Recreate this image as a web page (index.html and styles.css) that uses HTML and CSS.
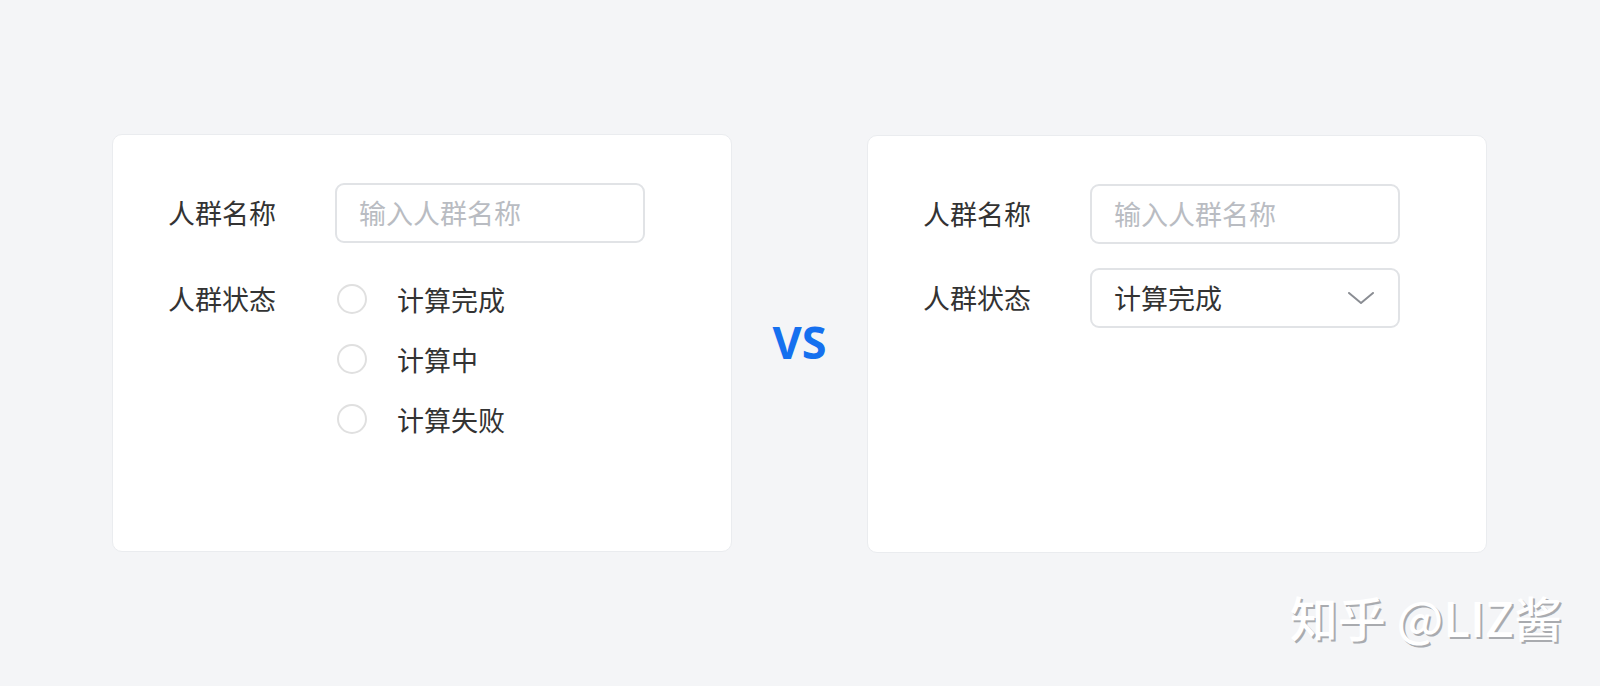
FILE: index.html
```html
<!DOCTYPE html>
<html lang="zh-CN">
<head>
<meta charset="utf-8">
<title>人群筛选对比</title>
<link rel="stylesheet" href="styles.css">
</head>
<body>
<div class="stage">
  <div class="card">
    <div class="row">
      <div class="label">人群名称</div>
      <div class="input placeholder">输入人群名称</div>
    </div>
    <div class="row">
      <div class="label">人群状态</div>
      <div class="radios">
        <div class="radio"><span class="circle"></span><span class="rtext">计算完成</span></div>
        <div class="radio"><span class="circle"></span><span class="rtext">计算中</span></div>
        <div class="radio"><span class="circle"></span><span class="rtext">计算失败</span></div>
      </div>
    </div>
  </div>
  <div class="vs">VS</div>
  <div class="card card-right">
    <div class="row">
      <div class="label">人群名称</div>
      <div class="input placeholder">输入人群名称</div>
    </div>
    <div class="row">
      <div class="label">人群状态</div>
      <div class="input select">
        <span class="value">计算完成</span>
        <svg class="chev" width="26" height="12" viewBox="0 0 26 12"><path d="M1 1 L13 11 L25 1" fill="none" stroke="#8a8d93" stroke-width="2" stroke-linecap="round" stroke-linejoin="round"/></svg>
      </div>
    </div>
  </div>
</div>
<div class="watermark">知乎 @LIZ酱</div>
</body>
</html>
```

FILE: styles.css
```css
html, body {
  margin: 0;
  padding: 0;
}
body {
  width: 1600px;
  height: 686px;
  background: #f4f5f7;
  font-family: "Noto Sans CJK SC", "Noto Sans", sans-serif;
  position: relative;
  overflow: hidden;
}
.stage {
  display: flex;
  align-items: flex-start;
  padding: 134px 0 0 112px;
}
.card {
  box-sizing: border-box;
  width: 620px;
  height: 418px;
  background: #fff;
  border: 1px solid #eaecef;
  border-radius: 10px;
  padding: 48px 0 0 55px;
  display: flex;
  flex-direction: column;
  gap: 26px;
}
.card-right {
  margin-top: 1px;
  gap: 24px;
}
.row {
  display: flex;
  align-items: flex-start;
}
.label {
  width: 167px;
  font-size: 27px;
  line-height: 60px;
  color: #333;
}
.input {
  box-sizing: border-box;
  width: 310px;
  height: 60px;
  border: 2px solid #e1e3e6;
  border-radius: 9px;
  padding-left: 22px;
  font-size: 27px;
  line-height: 56px;
  display: flex;
  align-items: center;
}
.placeholder {
  color: #b9bcc2;
}
.select {
  color: #333;
  justify-content: space-between;
  padding-right: 24px;
}
.chev {
  display: block;
}
.radios {
  display: flex;
  flex-direction: column;
}
.radio {
  height: 60px;
  display: flex;
  align-items: center;
}
.circle {
  box-sizing: border-box;
  width: 30px;
  height: 30px;
  margin-left: 2px;
  border: 2px solid #e0e0e0;
  border-radius: 50%;
}
.rtext {
  margin-left: 30px;
  font-size: 27px;
  color: #333;
}
.vs {
  width: 135px;
  height: 418px;
  display: flex;
  align-items: center;
  justify-content: center;
  font-family: "Open Sans", "Noto Sans", sans-serif;
  font-weight: 700;
  font-size: 45px;
  color: #1570ef;
  padding-bottom: 4px;
  box-sizing: border-box;
}
.watermark {
  position: absolute;
  right: 38px;
  top: 586px;
  font-family: "Noto Sans CJK SC", sans-serif;
  font-weight: 500;
  font-size: 48px;
  line-height: 60px;
  color: #ffffff;
  text-shadow: 2px 2px 0 #a9abaf;
  letter-spacing: 0;
}
```
